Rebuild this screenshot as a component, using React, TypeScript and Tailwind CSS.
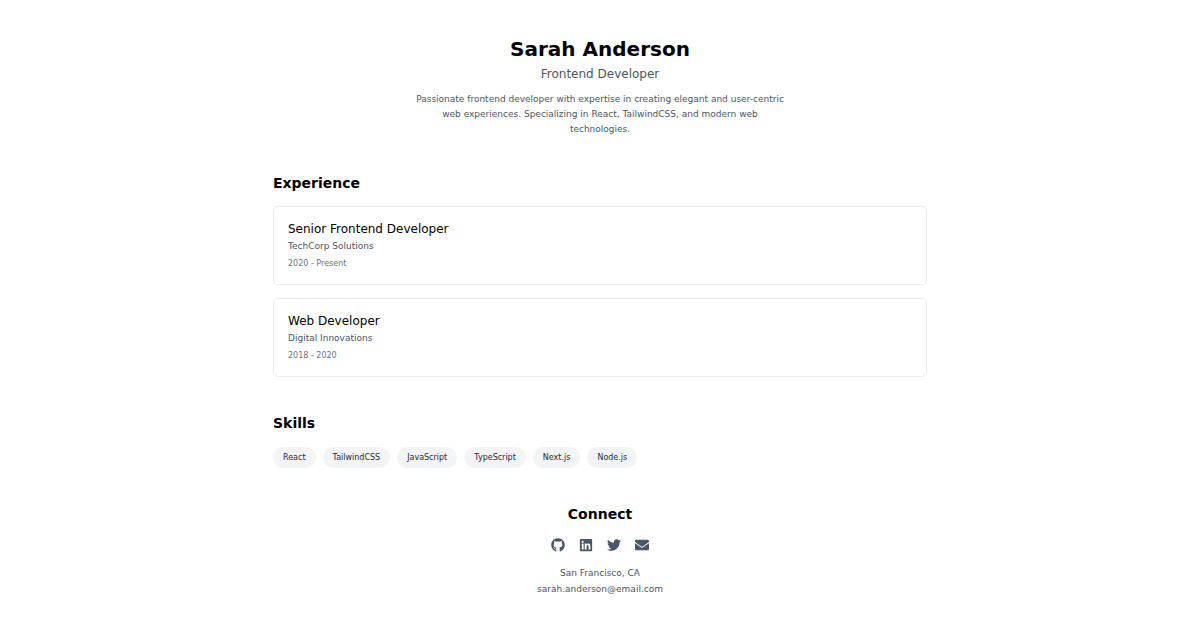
import React from "react";
import { FaEnvelope, FaGithub, FaLinkedin, FaTwitter } from "react-icons/fa";

const experiences = [
    { title: "Senior Frontend Developer", company: "TechCorp Solutions", period: "2020 - Present" },
    { title: "Web Developer", company: "Digital Innovations", period: "2018 - 2020" },
];

const skills = ["React", "TailwindCSS", "JavaScript", "TypeScript", "Next.js", "Node.js"];

const socials = [
    { label: "GitHub", href: "#github", Icon: FaGithub },
    { label: "LinkedIn", href: "#linkedin", Icon: FaLinkedin },
    { label: "Twitter", href: "#twitter", Icon: FaTwitter },
    { label: "Email", href: "mailto:sarah.anderson@email.com", Icon: FaEnvelope },
];

const Header: React.FC = () => (
    <header className="flex flex-col items-center text-center">
        <h1 className="text-[20px] leading-[23px] font-bold">Sarah Anderson</h1>
        <p className="mt-[5px] text-[12px] leading-[16px] text-gray-600">Frontend Developer</p>
        <p className="mt-2.5 max-w-[376px] text-[9px] leading-[15px] text-gray-600">
            Passionate frontend developer with expertise in creating elegant and user-centric web
            experiences. Specializing in React, TailwindCSS, and modern web technologies.
        </p>
    </header>
);

const Experience: React.FC = () => (
    <section>
        <h2 className="text-[14px] leading-[19px] font-bold">Experience</h2>
        <div className="mt-[13px] flex flex-col gap-[13px]">
            {experiences.map((job) => (
                <article key={job.title} className="rounded-[5px] border border-[#e9ebef] p-3.5">
                    <h3 className="text-[12px] leading-[16px]">{job.title}</h3>
                    <p className="mt-0.5 text-[9px] leading-[14px] text-gray-600">{job.company}</p>
                    <p className="mt-[5px] text-[8px] leading-[12px] text-gray-500">{job.period}</p>
                </article>
            ))}
        </div>
    </section>
);

const Skills: React.FC = () => (
    <section>
        <h2 className="text-[14px] leading-[19px] font-bold">Skills</h2>
        <ul className="mt-3.5 flex flex-wrap gap-[7px]">
            {skills.map((skill) => (
                <li key={skill} className="rounded-full bg-gray-100 px-2.5 py-[5px] text-[8px] leading-[11px] text-gray-800">
                    {skill}
                </li>
            ))}
        </ul>
    </section>
);

const Connect: React.FC = () => (
    <footer className="flex flex-col items-center text-center">
        <h2 className="text-[14px] leading-[19px] font-bold">Connect</h2>
        <div className="mt-3.5 flex gap-3.5 text-gray-600">
            {socials.map(({ label, href, Icon }) => (
                <a key={label} href={href} aria-label={label}>
                    <Icon size={14} />
                </a>
            ))}
        </div>
        <div className="mt-3.5 flex flex-col gap-0.5 text-[9px] leading-[14px] text-gray-600">
            <p>San Francisco, CA</p>
            <p>sarah.anderson@email.com</p>
        </div>
    </footer>
);

const App: React.FC = () => {
    return (
        <div className="bg-white font-['DejaVu_Sans',sans-serif] text-black">
            <main className="mx-auto flex max-w-[672px] flex-col gap-[37px] px-[9px] pt-[38px] pb-8">
                <Header />
                <Experience />
                <Skills />
                <Connect />
            </main>
        </div>
    );
};

export default App;
